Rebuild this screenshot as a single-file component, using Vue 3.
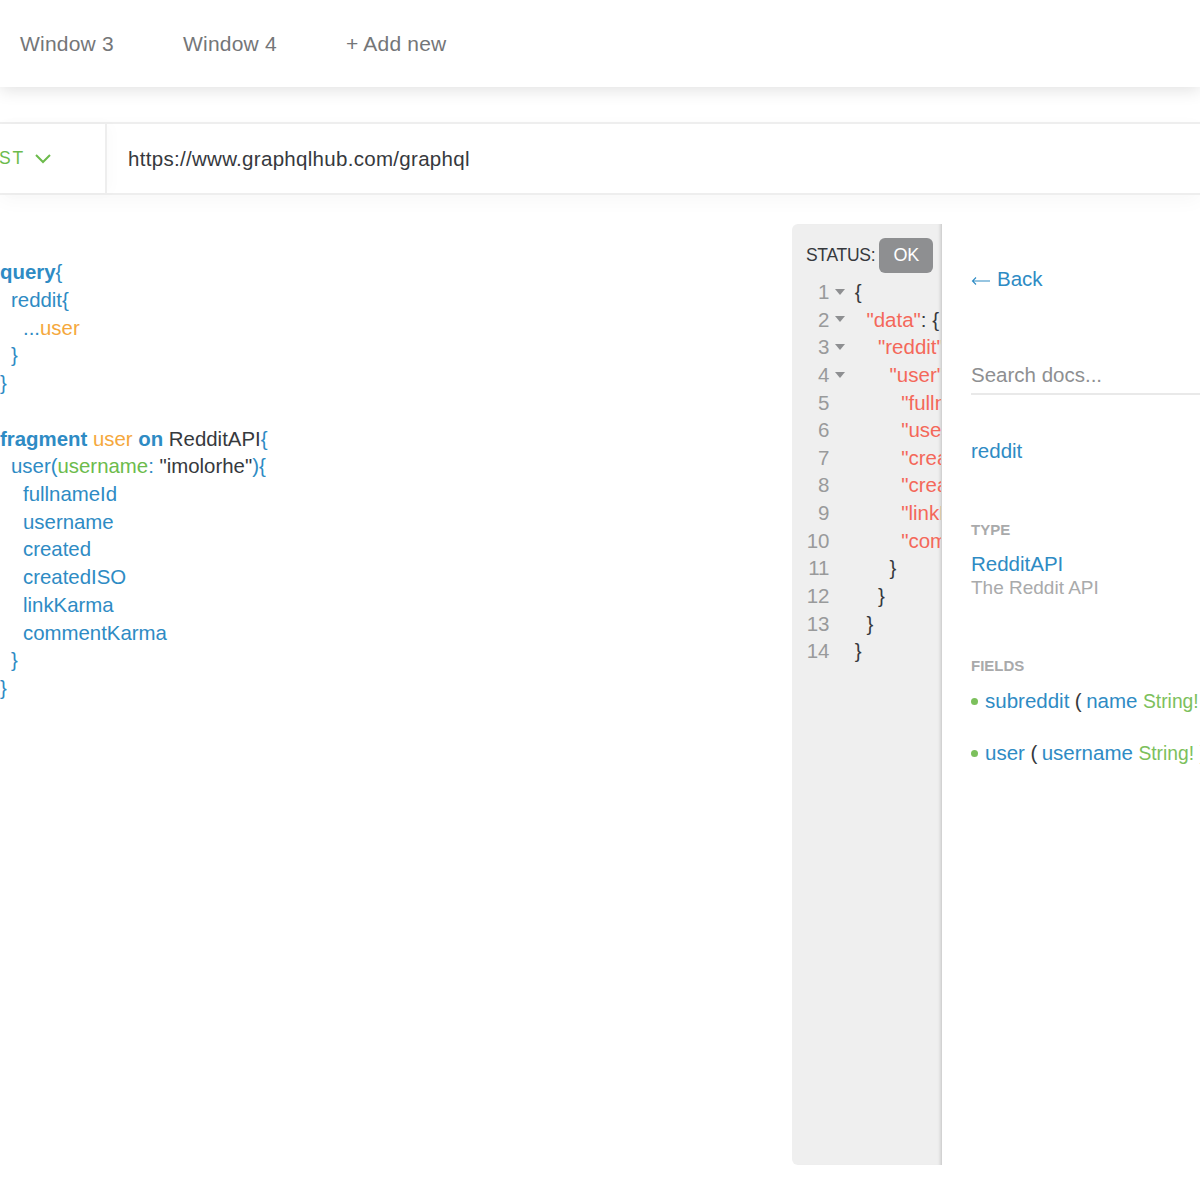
<template>
  <div class="page">
    <header class="tabs">
      <span class="tab">Window 3</span>
      <span class="tab">Window 4</span>
      <span class="tab add">+ Add new</span>
    </header>

    <div class="url-bar">
      <div class="method">
        <span class="method-name">POST</span>
        <svg class="chevron" width="16" height="10" viewBox="0 0 16 10">
          <path d="M1 1l7 7 7-7" fill="none" stroke="#6cbb4c" stroke-width="2" />
        </svg>
      </div>
      <div class="url">https://www.graphqlhub.com/graphql</div>
    </div>

    <main class="workspace">
      <section class="editor">
        <div class="code-line"><b class="kw">query</b><span class="bl">{</span></div>
        <div class="code-line indent-1"><span class="bl">reddit{</span></div>
        <div class="code-line indent-2"><span class="bl">...</span><span class="or">user</span></div>
        <div class="code-line indent-1"><span class="bl">}</span></div>
        <div class="code-line"><span class="bl">}</span></div>
        <div class="code-line">&nbsp;</div>
        <div class="code-line"><b class="kw">fragment</b> <span class="or">user</span> <b class="kw">on</b> RedditAPI<span class="bl">{</span></div>
        <div class="code-line indent-1"><span class="bl">user(</span><span class="gr">username</span><span class="bl">:</span> "imolorhe"<span class="bl">){</span></div>
        <div v-for="f in fields" :key="f" class="code-line indent-2"><span class="bl">{{ f }}</span></div>
        <div class="code-line indent-1"><span class="bl">}</span></div>
        <div class="code-line"><span class="bl">}</span></div>
      </section>

      <section class="response">
        <div class="status">
          <span>STATUS:</span>
          <span class="status-badge">OK</span>
        </div>
        <div class="result">
          <div v-for="(line, i) in result" :key="i" class="result-line">
            <span class="line-no">{{ i + 1 }}</span>
            <span class="fold"><i v-if="i < 4" class="fold-arrow"></i></span>
            <span class="result-code" :style="{ paddingLeft: line.level * 11.6 + 'px' }"><span class="key">{{ line.key }}</span>{{ line.rest }}</span>
          </div>
        </div>
      </section>

      <aside class="docs">
        <a class="back">
          <svg class="back-arrow" width="19" height="10" viewBox="0 0 19 10">
            <path d="M19 5H1.5M5 1.5L1.5 5 5 8.5" fill="none" stroke="#2e8bc4" stroke-width="1.1" />
          </svg>
          Back
        </a>
        <div class="search">Search docs...</div>
        <a class="link field-name">reddit</a>

        <h4 class="doc-title type-title">TYPE</h4>
        <a class="link">RedditAPI</a>
        <p class="desc">The Reddit API</p>

        <h4 class="doc-title fields-title">FIELDS</h4>
        <div class="doc-field">
          <i class="dot"></i><a class="link">subreddit</a><span class="paren">(</span><a class="link">name</a><span class="type">String!</span><span>)</span>
        </div>
        <div class="doc-field">
          <i class="dot"></i><a class="link">user</a><span class="paren">(</span><a class="link">username</a><span class="type">String!</span><span>)</span>
        </div>
      </aside>
    </main>
  </div>
</template>

<script setup>
const fields = ['fullnameId', 'username', 'created', 'createdISO', 'linkKarma', 'commentKarma']

const result = [
  { level: 0, key: '', rest: '{' },
  { level: 1, key: '"data"', rest: ': {' },
  { level: 2, key: '"reddit"', rest: ': {' },
  { level: 3, key: '"user"', rest: ': {' },
  { level: 4, key: '"fullnameId"', rest: ':' },
  { level: 4, key: '"username"', rest: ':' },
  { level: 4, key: '"created"', rest: ':' },
  { level: 4, key: '"createdISO"', rest: ':' },
  { level: 4, key: '"linkKarma"', rest: ':' },
  { level: 4, key: '"commentKarma"', rest: ':' },
  { level: 3, key: '', rest: '}' },
  { level: 2, key: '', rest: '}' },
  { level: 1, key: '', rest: '}' },
  { level: 0, key: '', rest: '}' }
]
</script>

<style>
body {
  background: #fff;
  overflow: hidden;
}
</style>

<style scoped>
.page {
  width: 1200px;
  height: 1200px;
  overflow: hidden;
  background: #fff;
  font-family: "Liberation Sans", Arial, sans-serif;
  color: #36393d;
}

.tabs {
  position: relative;
  display: flex;
  align-items: center;
  height: 87px;
  padding-left: 20px;
  background: #fff;
  box-shadow: 0 3px 16px rgba(0, 0, 0, 0.12);
}

.tab {
  width: 163px;
  font-size: 21px;
  letter-spacing: 0.2px;
  color: #747678;
}

.url-bar {
  display: flex;
  height: 73px;
  margin-top: 35px;
  border-top: 2px solid #eeeeee;
  border-bottom: 2px solid #eeeeee;
  box-sizing: border-box;
  box-shadow: 0 6px 18px rgba(0, 0, 0, 0.03);
}

.method {
  display: flex;
  flex: none;
  align-items: center;
  justify-content: flex-end;
  gap: 10px;
  width: 107px;
  padding-right: 54px;
  box-sizing: border-box;
  overflow: hidden;
  border-right: 2px solid #eeeeee;
  box-shadow: 4px 0 14px rgba(0, 0, 0, 0.02);
}

.method-name {
  flex: none;
  font-size: 17.5px;
  letter-spacing: 1.8px;
  color: #6cbb4c;
}

.chevron {
  flex: none;
}

.url {
  display: flex;
  align-items: center;
  padding-left: 21px;
  font-size: 20.5px;
  letter-spacing: 0.3px;
}

.workspace {
  display: flex;
  height: 941px;
  margin-top: 29px;
}

.editor {
  flex: none;
  width: 792px;
  padding-top: 35.3px;
  box-sizing: border-box;
  font-size: 20.4px;
  line-height: 27.72px;
}

.code-line {
  white-space: pre;
}

.indent-1 {
  padding-left: 11px;
}

.indent-2 {
  padding-left: 23px;
}

.kw {
  color: #2e8bc4;
}

.bl {
  color: #2e8bc4;
}

.or {
  color: #f5a83c;
}

.gr {
  color: #6cbb4c;
}

.response {
  flex: none;
  width: 149px;
  overflow: hidden;
  padding-top: 14px;
  box-sizing: border-box;
  border-radius: 6px 0 0 6px;
  background: #efefef;
  box-shadow: inset -3px 0 3px -2px rgba(0, 0, 0, 0.12);
}

.status {
  display: flex;
  align-items: center;
  gap: 4px;
  padding-left: 14px;
  font-size: 17.5px;
  letter-spacing: -0.3px;
  white-space: nowrap;
}

.status-badge {
  display: flex;
  align-items: center;
  justify-content: center;
  flex: none;
  width: 54px;
  height: 35px;
  border-radius: 6px;
  background: #8e8f91;
  color: #fff;
  font-size: 18px;
}

.result {
  margin-top: 5px;
  font-size: 20.5px;
  line-height: 27.62px;
}

.result-line {
  display: flex;
  white-space: pre;
}

.line-no {
  flex: none;
  width: 37.5px;
  text-align: right;
  color: #999a9b;
}

.fold {
  display: flex;
  flex: none;
  align-items: center;
  width: 25.3px;
  padding-left: 5.5px;
  box-sizing: border-box;
}

.fold-arrow {
  width: 0;
  height: 0;
  border-top: 6px solid #8e8f91;
  border-left: 5.5px solid transparent;
  border-right: 5.5px solid transparent;
}

.key {
  color: #f4685a;
}

.docs {
  flex: 1;
  min-width: 0;
  padding: 43px 0 0 29px;
  overflow: hidden;
  background: #fff;
  border-left: 1px solid #d2d2d2;
  font-size: 20.5px;
  white-space: nowrap;
}

.back,
.link {
  color: #2e8bc4;
}

.back {
  display: flex;
  align-items: center;
  gap: 7px;
}

.back-arrow {
  flex: none;
  margin-top: 3px;
}

.search {
  margin-top: 72px;
  padding-bottom: 6px;
  border-bottom: 2px solid #e9e9e9;
  color: #8e8f91;
}

.field-name {
  display: block;
  margin-top: 44px;
}

.doc-title {
  margin: 0;
  font-size: 15px;
  color: #a9aaab;
}

.type-title {
  margin-top: 58px;
}

.type-title + .link {
  display: block;
  margin-top: 14px;
}

.desc {
  margin: 1px 0 0;
  font-size: 19px;
  color: #a9aaab;
}

.fields-title {
  margin-top: 58px;
}

.doc-field {
  display: flex;
  align-items: baseline;
  gap: 5.5px;
  height: 24px;
  margin-top: 28px;
}

.fields-title + .doc-field {
  margin-top: 15px;
}

.dot {
  flex: none;
  align-self: center;
  width: 7px;
  height: 7px;
  margin-right: 1.5px;
  border-radius: 50%;
  background: #7cc05c;
}

.paren {
  margin-right: -1px;
}

.type {
  font-size: 19.3px;
  color: #7cc05c;
}
</style>
